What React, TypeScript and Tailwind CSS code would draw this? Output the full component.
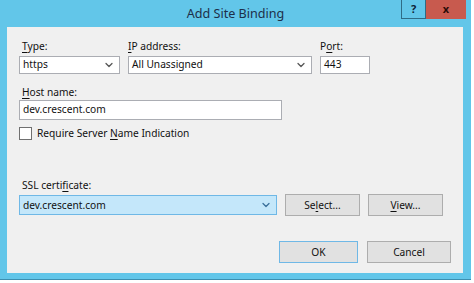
import { ChevronDown } from "lucide-react";

const font = { fontFamily: '"Noto Sans", "Open Sans", sans-serif' };

function Chevron() {
  return <ChevronDown className="h-3 w-3 text-[#555]" strokeWidth={2.5} />;
}

function U({ children }: { children: string }) {
  return <span className="underline underline-offset-2">{children}</span>;
}

function App() {
  return (
    <div className="h-[283px] w-[474px] bg-white text-[10.2px] text-[#111]" style={font}>
      <div className="flex h-[280px] w-[471px] flex-col border-b border-[#3d8fb0] bg-[#62c6e9]">
        {/* title bar */}
        <div className="relative flex h-[27px] items-center justify-center">
          <span className="pt-[1px] text-[12.6px] text-[#1d2f4a]">Add Site Binding</span>
          <div className="absolute right-[5px] top-0 flex h-[19px]">
            <div className="flex w-[25px] items-center justify-center border border-t-0 border-[#2f6c86] bg-[#62c6e9] text-[11px] font-bold text-[#0d2136]">
              ?
            </div>
            <div className="flex w-[40px] items-center justify-center bg-[#c85a4e] text-[11px] font-bold text-[#2b0c08]">
              x
            </div>
          </div>
        </div>

        {/* body */}
        <div className="ml-[7px] h-[246px] w-[456px] bg-[#f0f0f0] px-[12px] pt-[11px]">
          <div className="flex gap-[8px]">
            <div className="flex w-[101px] flex-col">
              <span className="pl-[3px] leading-[16px]">
                <U>T</U>ype:
              </span>
              <div className="mt-[2px] flex h-[18px] items-center justify-between border border-[#abadb3] bg-white pl-[3px] pr-[4px]">
                <span>https</span>
                <Chevron />
              </div>
            </div>
            <div className="flex w-[184px] flex-col">
              <span className="leading-[16px]">
                <U>I</U>P address:
              </span>
              <div className="mt-[2px] flex h-[18px] items-center justify-between border border-[#abadb3] bg-white pl-[3px] pr-[4px]">
                <span>All Unassigned</span>
                <Chevron />
              </div>
            </div>
            <div className="flex w-[50px] flex-col">
              <span className="leading-[16px]">
                P<U>o</U>rt:
              </span>
              <div className="mt-[2px] flex h-[18px] items-center border border-[#abadb3] bg-white pl-[3px]">443</div>
            </div>
          </div>

          <div className="mt-[10px] flex w-[263px] flex-col">
            <span className="pl-[3px] leading-[16px]">
              <U>H</U>ost name:
            </span>
            <div className="flex h-[20px] items-center border border-[#abadb3] bg-white pl-[3px]">
              dev.crescent.com
            </div>
          </div>

          <div className="mt-[6px] flex items-center gap-[5px]">
            <div className="h-[13px] w-[13px] border border-[#707070] bg-white" />
            <span>
              Require Server <U>N</U>ame Indication
            </span>
          </div>

          <div className="mt-[36px] flex flex-col">
            <span className="pl-[3px] leading-[16px]">
              SSL certi<U>f</U>icate:
            </span>
            <div className="mt-[1px] flex items-center">
              <div className="flex h-[20px] w-[258px] items-center justify-between border border-[#6fb8e6] bg-[#c4e7fa] pl-[3px] pr-[4px]">
                <span>dev.crescent.com</span>
                <ChevronDown className="h-3 w-3 text-[#3a6f9a]" strokeWidth={2.5} />
              </div>
              <button className="ml-[8px] h-[22px] w-[75px] border border-[#adadad] bg-[#e1e1e1]">
                Se<U>l</U>ect...
              </button>
              <button className="ml-[8px] h-[22px] w-[75px] border border-[#adadad] bg-[#e1e1e1]">
                <U>V</U>iew...
              </button>
            </div>
          </div>

          <div className="mt-[25px] flex justify-end gap-[9px]">
            <button className="h-[22px] w-[79px] border border-[#6fb8e6] bg-[#e1e1e1]">OK</button>
            <button className="h-[22px] w-[84px] border border-[#adadad] bg-[#e1e1e1]">Cancel</button>
          </div>
        </div>
      </div>
    </div>
  );
}

export default App;
